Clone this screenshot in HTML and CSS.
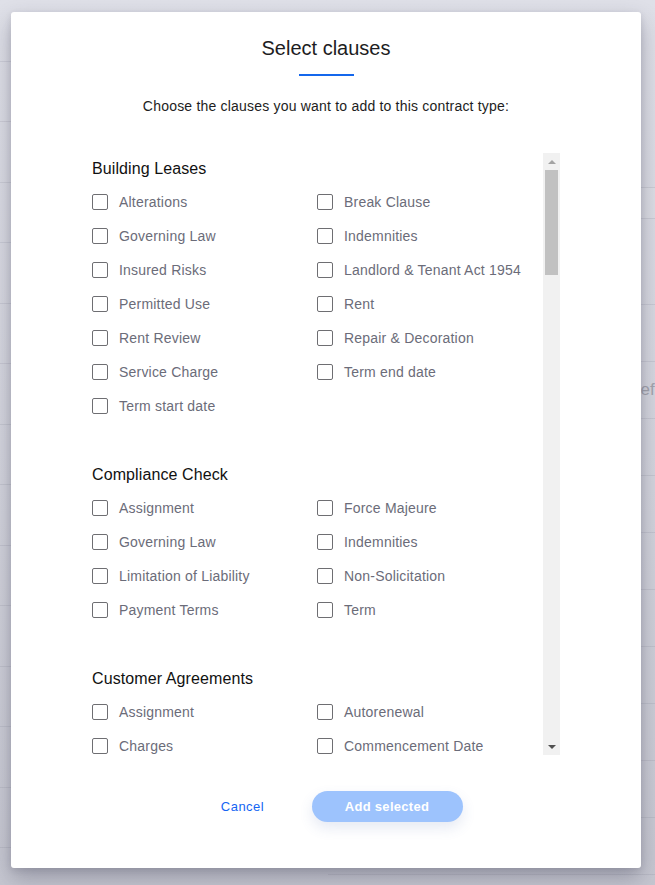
FILE: index.html
```html
<!DOCTYPE html>
<html lang="en">
<head>
<meta charset="utf-8">
<title>Select clauses</title>
<link rel="stylesheet" href="styles.css">
</head>
<body>
<div class="page">
  <div class="pane-left"></div>
  <div class="pane-right">
    <div class="band"></div>
    <div class="rows"><span class="ghost">ef</span></div>
  </div>
</div>

<div class="modal" role="dialog" aria-labelledby="dlg-title">
  <h1 class="title" id="dlg-title">Select clauses</h1>
  <div class="title-rule"></div>
  <p class="intro">Choose the clauses you want to add to this contract type:</p>

  <div class="list-wrap">
    <div class="list">
      <section class="group">
        <h2 class="group-title">Building Leases</h2>
        <div class="grid">
          <label class="item"><span class="box"></span>Alterations</label>
          <label class="item"><span class="box"></span>Break Clause</label>
          <label class="item"><span class="box"></span>Governing Law</label>
          <label class="item"><span class="box"></span>Indemnities</label>
          <label class="item"><span class="box"></span>Insured Risks</label>
          <label class="item"><span class="box"></span>Landlord &amp; Tenant Act 1954</label>
          <label class="item"><span class="box"></span>Permitted Use</label>
          <label class="item"><span class="box"></span>Rent</label>
          <label class="item"><span class="box"></span>Rent Review</label>
          <label class="item"><span class="box"></span>Repair &amp; Decoration</label>
          <label class="item"><span class="box"></span>Service Charge</label>
          <label class="item"><span class="box"></span>Term end date</label>
          <label class="item"><span class="box"></span>Term start date</label>
        </div>
      </section>
      <section class="group">
        <h2 class="group-title">Compliance Check</h2>
        <div class="grid">
          <label class="item"><span class="box"></span>Assignment</label>
          <label class="item"><span class="box"></span>Force Majeure</label>
          <label class="item"><span class="box"></span>Governing Law</label>
          <label class="item"><span class="box"></span>Indemnities</label>
          <label class="item"><span class="box"></span>Limitation of Liability</label>
          <label class="item"><span class="box"></span>Non-Solicitation</label>
          <label class="item"><span class="box"></span>Payment Terms</label>
          <label class="item"><span class="box"></span>Term</label>
        </div>
      </section>
      <section class="group">
        <h2 class="group-title">Customer Agreements</h2>
        <div class="grid">
          <label class="item"><span class="box"></span>Assignment</label>
          <label class="item"><span class="box"></span>Autorenewal</label>
          <label class="item"><span class="box"></span>Charges</label>
          <label class="item"><span class="box"></span>Commencement Date</label>
        </div>
      </section>
    </div>
    <div class="scrollbar" aria-hidden="true">
      <div class="sb-btn"><span class="arrow-up"></span></div>
      <div class="sb-thumb"></div>
      <div class="sb-track"></div>
      <div class="sb-btn"><span class="arrow-down"></span></div>
    </div>
  </div>

  <div class="actions">
    <button class="btn-cancel" type="button">Cancel</button>
    <button class="btn-add" type="button" disabled>Add selected</button>
  </div>
</div>
</body>
</html>
```

FILE: styles.css
```css
* { box-sizing: border-box; }

html, body {
  margin: 0;
  padding: 0;
  height: 100%;
}

body {
  width: 655px;
  height: 885px;
  overflow: hidden;
  position: relative;
  font-family: "Liberation Sans", Arial, sans-serif;
  background: linear-gradient(to bottom, #dfe0e8 0%, #d3d4dd 55%, #c6c7d1 100%);
}

/* dimmed page behind the dialog */
.page {
  display: flex;
  height: 885px;
}

.pane-left {
  width: 330px;
  background-image: repeating-linear-gradient(to bottom,
    transparent 0, transparent 59.5px,
    rgba(120, 122, 140, 0.16) 59.5px, rgba(120, 122, 140, 0.16) 60.5px);
  background-position: 0 1px;
}

.pane-right {
  flex: 1;
  display: flex;
  flex-direction: column;
}

.band {
  margin-top: 187px;
  height: 32px;
  border-top: 1px solid rgba(120, 122, 140, 0.18);
  border-bottom: 1px solid rgba(120, 122, 140, 0.18);
  background: rgba(255, 255, 255, 0.06);
}

.rows {
  flex: 1;
  padding: 161px 0 0 312px;
  background-image: repeating-linear-gradient(to bottom,
    transparent 0, transparent 56px,
    rgba(120, 122, 140, 0.16) 56px, rgba(120, 122, 140, 0.16) 57px);
  background-position: 0 29px;
}

.ghost {
  font-size: 17px;
  color: #a3a4ae;
  letter-spacing: 0.2px;
}

/* dialog */
.modal {
  position: absolute;
  left: 11px;
  top: 12px;
  width: 630px;
  height: 856px;
  background: #fff;
  border-radius: 3px;
  box-shadow: 0 10px 22px rgba(50, 50, 70, 0.32), 0 2px 6px rgba(50, 50, 70, 0.12);
  display: flex;
  flex-direction: column;
  align-items: center;
  padding-top: 24px;
}

.title {
  margin: 0;
  font-size: 20px;
  line-height: 24px;
  font-weight: 400;
  color: #1d1d22;
}

.title-rule {
  width: 55px;
  height: 2px;
  margin-top: 14px;
  background: #1467ec;
}

.intro {
  margin: 21px 0 0;
  font-size: 14px;
  line-height: 18px;
  letter-spacing: 0.2px;
  color: #1d1d22;
}

.list-wrap {
  margin-top: 38px;
  width: 468px;
  height: 602px;
  display: flex;
}

.list {
  flex: 1;
  overflow: hidden;
  padding-top: 3.5px;
}

.group + .group {
  margin-top: 40px;
}

.group-title {
  margin: 0 0 4px;
  font-size: 16px;
  line-height: 24px;
  font-weight: 400;
  letter-spacing: 0.1px;
  color: #111;
}

.grid {
  display: grid;
  grid-template-columns: 225px 225px;
  grid-auto-rows: 34px;
}

.item {
  display: flex;
  align-items: center;
  gap: 11px;
  font-size: 14px;
  letter-spacing: 0.2px;
  color: #6b6c79;
  white-space: nowrap;
}

.box {
  width: 16px;
  height: 16px;
  flex: none;
  border: 1px solid #6e6e72;
  border-radius: 2px;
  background: #fff;
}

/* scrollbar */
.scrollbar {
  width: 17px;
  flex: none;
  background: #f1f1f1;
  display: flex;
  flex-direction: column;
}

.sb-btn {
  height: 17px;
  display: flex;
  align-items: center;
  justify-content: center;
}

.arrow-up {
  width: 0;
  height: 0;
  border-left: 4px solid transparent;
  border-right: 4px solid transparent;
  border-bottom: 4px solid #a3a3a3;
}

.arrow-down {
  width: 0;
  height: 0;
  border-left: 4px solid transparent;
  border-right: 4px solid transparent;
  border-top: 4px solid #505050;
}

.sb-thumb {
  height: 105px;
  margin: 0 2px;
  background: #c1c1c1;
}

.sb-track {
  flex: 1;
}

/* footer */
.actions {
  margin-top: 36px;
  display: flex;
  gap: 16px;
}

.btn-cancel,
.btn-add {
  height: 31px;
  border: 0;
  font-family: "Liberation Sans", Arial, sans-serif;
  font-size: 13px;
  letter-spacing: 0.5px;
  cursor: pointer;
}

.btn-cancel {
  width: 106px;
  background: transparent;
  color: #1565f3;
}

.btn-add {
  width: 151px;
  border-radius: 16px;
  background: #9dc3fd;
  color: #fff;
  font-weight: 700;
  letter-spacing: 0.3px;
  box-shadow: 0 6px 14px rgba(70, 100, 170, 0.14);
}
```
